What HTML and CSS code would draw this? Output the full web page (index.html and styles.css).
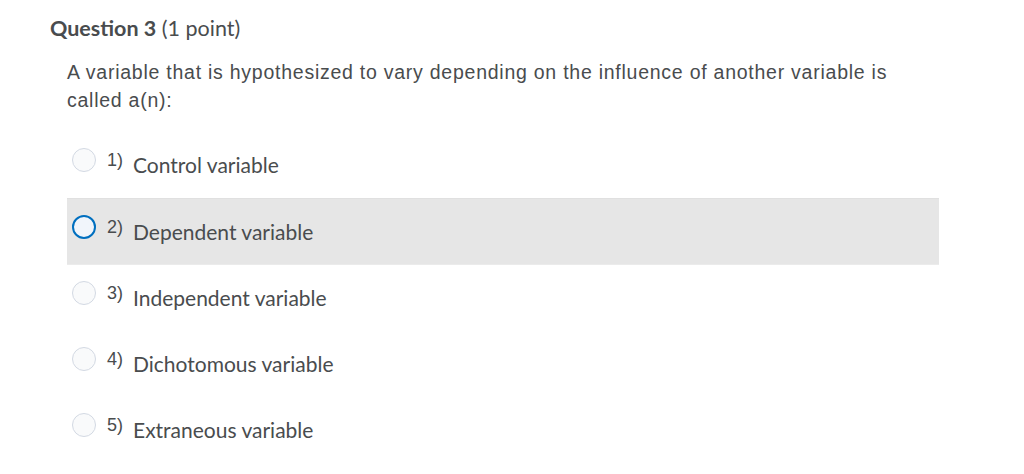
FILE: index.html
```html
<!DOCTYPE html>
<html>
<head>
<meta charset="utf-8">
<link rel="stylesheet" href="styles.css">
</head>
<body>
<div class="page">
  <h2 class="title"><span class="strong">Question 3</span> (1 point)</h2>
  <div class="body">
    <p class="prompt">A variable that is hypothesized to vary depending on the influence of another variable is called a(n):</p>
    <div class="options">
      <div class="opt"><span class="radio"></span><span class="num">1)</span><span class="label">Control variable</span></div>
      <div class="opt sel"><span class="radio focus"></span><span class="num">2)</span><span class="label">Dependent variable</span></div>
      <div class="opt"><span class="radio"></span><span class="num">3)</span><span class="label">Independent variable</span></div>
      <div class="opt"><span class="radio"></span><span class="num">4)</span><span class="label">Dichotomous variable</span></div>
      <div class="opt"><span class="radio"></span><span class="num">5)</span><span class="label">Extraneous variable</span></div>
    </div>
  </div>
</div>
</body>
</html>
```
FILE: styles.css
```css
html, body { margin: 0; padding: 0; background: #fff; }
.page { padding: 14px 0 0 50px; color: #494c4e; }
.title {
  margin: 0;
  font-family: Lato, "Open Sans", sans-serif;
  font-size: 21.5px;
  font-weight: 400;
  line-height: 28px;
}
.title .strong { font-weight: 700; }
.body { padding-left: 17px; width: 872px; }
.prompt {
  margin: 16px 0 0 0;
  font-family: "Liberation Sans", Arial, sans-serif;
  font-size: 19.5px;
  letter-spacing: 0.75px;
  line-height: 28px;
  padding-right: 40px;
}
.options { margin-top: 18px; }
.opt {
  height: 66px;
  box-sizing: border-box;
  display: flex;
  align-items: flex-start;
  padding: 16px 0 0 5px;
}
.opt.sel { background: #e6e6e6; border-top: 1px solid #e0e0e0; border-bottom: 1px solid #ebebeb; padding-top: 16px; height: 67px; }
.radio {
  width: 24px; height: 24px;
  box-sizing: border-box;
  border-radius: 50%;
  border: 1px solid #d3d9e3;
  background: #f9fafb;
  flex: none;
}
.radio.focus { border: 2px solid #006fbf; background: #f1f5fb; }
.num {
  font-family: "Liberation Sans", Arial, sans-serif;
  font-size: 18px;
  line-height: 18px;
  margin: 3px 0 0 11px;
  width: 26px;
}
.label {
  font-family: Lato, "Open Sans", sans-serif;
  font-size: 21px;
  line-height: 24px;
  margin-top: 5px;
}
```
